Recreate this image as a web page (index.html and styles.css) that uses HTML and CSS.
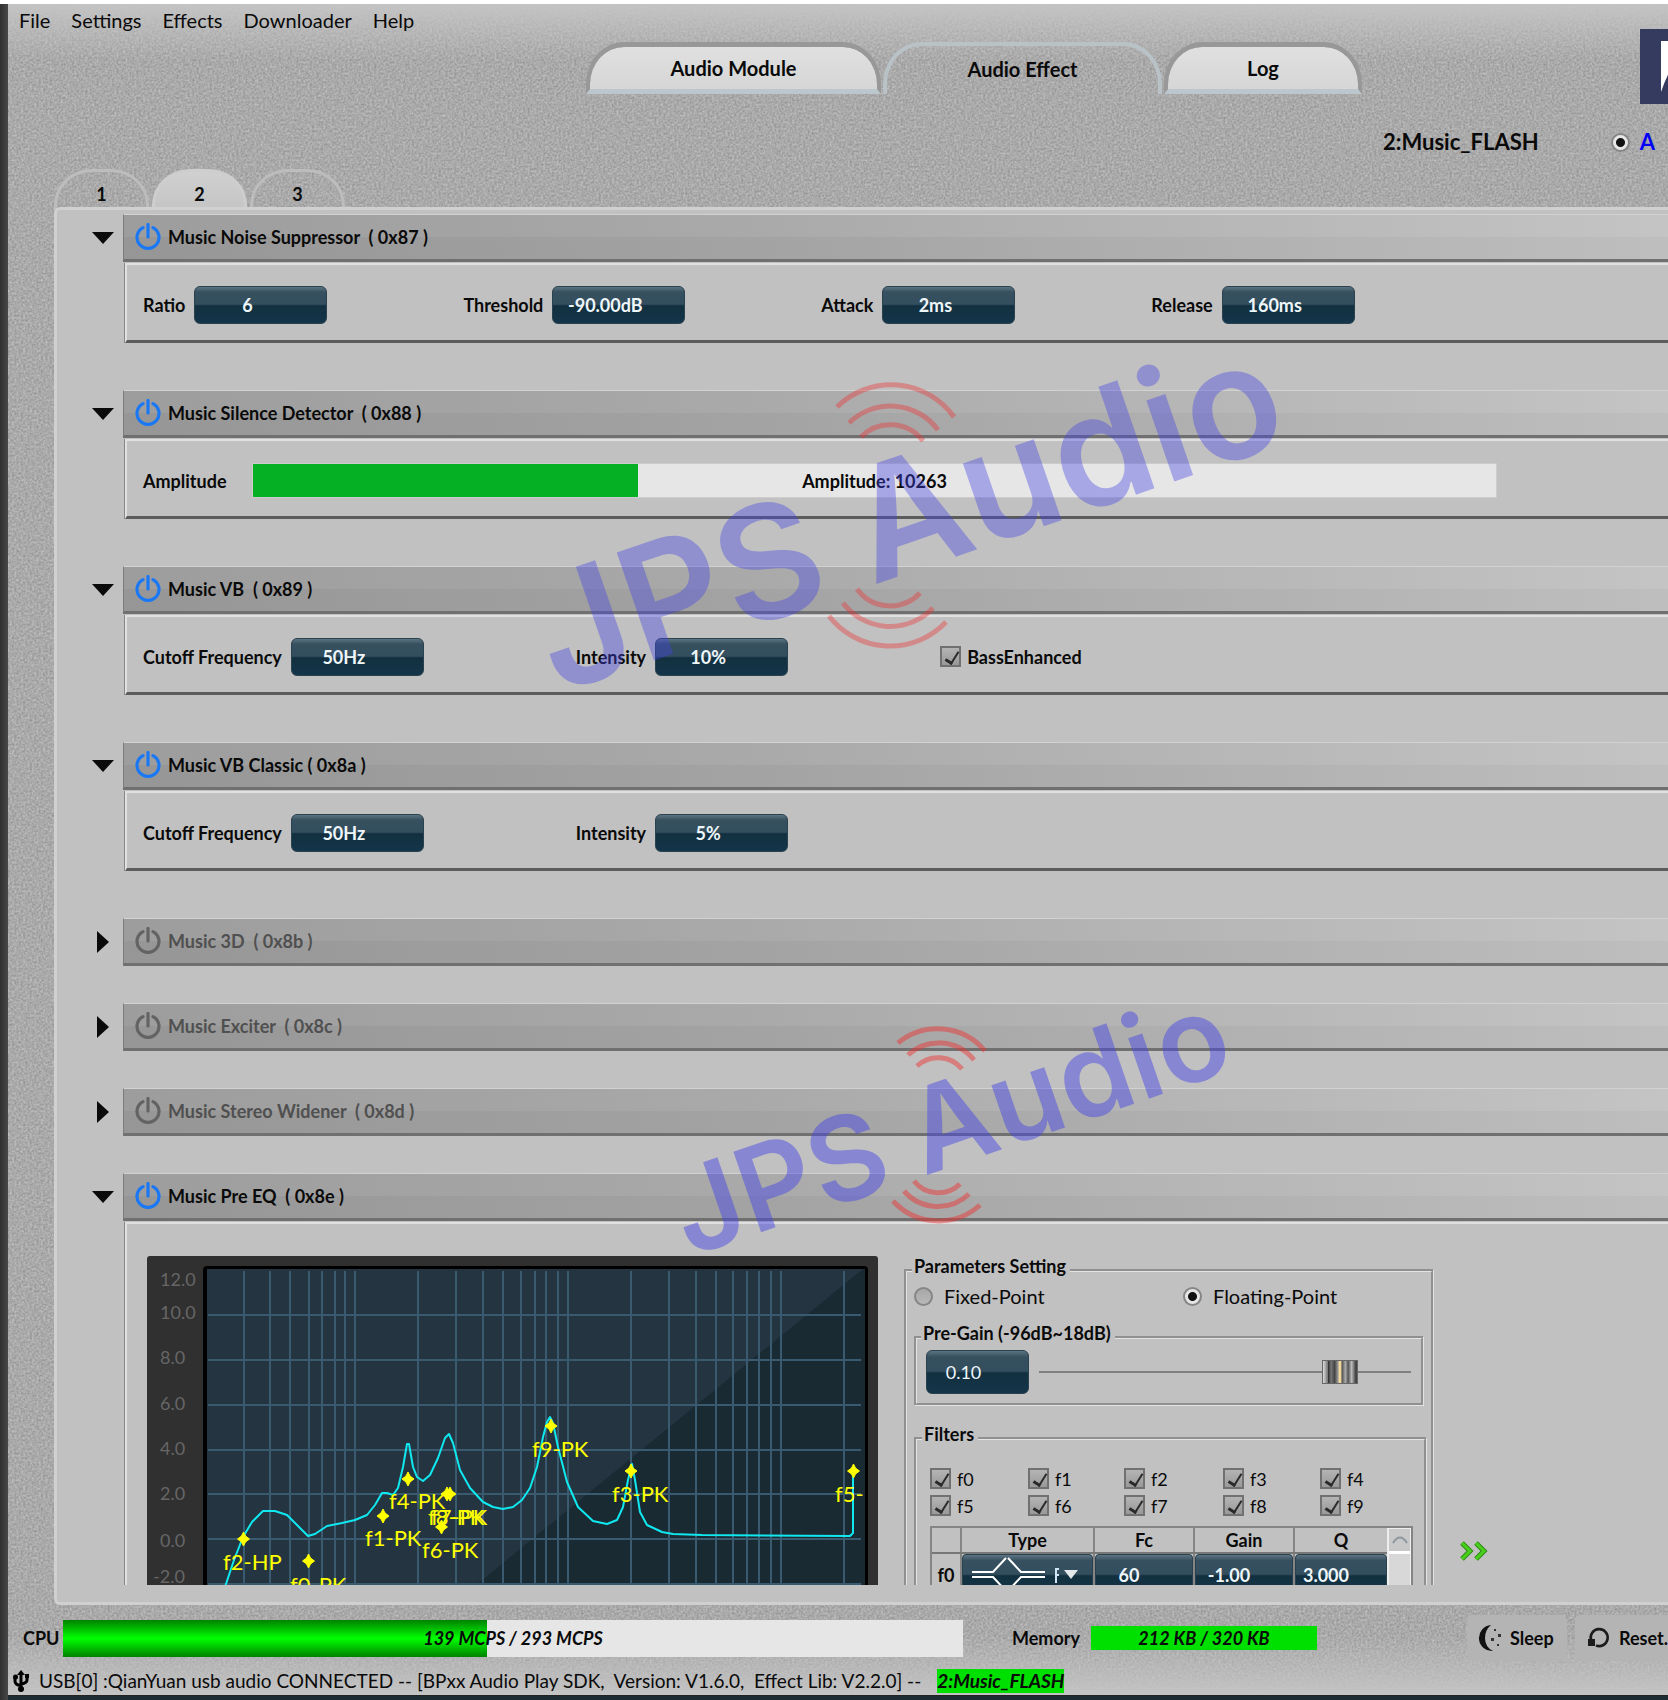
FILE: index.html
```html
<!DOCTYPE html>
<html lang="en">
<head>
<meta charset="utf-8">
<title>Audio Effect</title>
<link rel="stylesheet" href="styles.css">
</head>
<body>
<svg class="defs" aria-hidden="true">
  <symbol id="power" viewBox="0 0 28 28"><path d="M9 4.600A11 11 0 1 0 19 4.600M14 1.500V14" fill="none" stroke="currentColor" stroke-width="3.200" stroke-linecap="round"/></symbol>
  <symbol id="down" viewBox="0 0 22 12"><path d="M0 0H22L11 12Z" fill="#0a0a0a"/></symbol>
  <symbol id="right" viewBox="0 0 12 22"><path d="M0 0V22L12 11Z" fill="#0a0a0a"/></symbol>
</svg>
<div class="window">
  <svg class="grain" aria-hidden="true" width="100%" height="100%">
    <filter id="noise" x="0" y="0" width="100%" height="100%" color-interpolation-filters="sRGB"><feTurbulence type="fractalNoise" baseFrequency="0.45" numOctaves="2" seed="4"/><feColorMatrix values="0.25 0 0 0 0.54  0.25 0 0 0 0.54  0.25 0 0 0 0.54  0 0 0 0 1"/></filter>
    <rect width="100%" height="100%" filter="url(#noise)"/>
  </svg>
  <header class="top">
    <nav class="menu"><a href="#">File</a><a href="#">Settings</a><a href="#">Effects</a><a href="#">Downloader</a><a href="#">Help</a></nav>
    <div class="tabs">
      <button class="tab module">Audio Module</button>
      <button class="tab effect">Audio Effect</button>
      <button class="tab log">Log</button>
      <svg class="logo" viewBox="0 0 75 75"><rect width="75" height="75" fill="#353a5f"/><path d="M21 12H40V40L32 38Q25 51 21 63Z" fill="#fff"/></svg>
    </div>
    <div class="mode"><span class="preset">2:Music_FLASH</span><label class="chan"><input type="radio" name="chan" checked>A</label></div>
    <div class="pages"><button class="page">1</button><button class="page on">2</button><button class="page">3</button></div>
  </header>

  <main class="panel">
    <div class="scroller">
      <section class="fx">
        <button class="fold" aria-label="Collapse"><svg width="22" height="12"><use href="#down"/></svg></button>
        <h2><button class="pow" aria-label="Power"><svg width="28" height="28"><use href="#power"/></svg></button>Music Noise Suppressor&nbsp; ( 0x87 )</h2>
        <div class="body row">
          <label>Ratio<input type="text" value="6"></label>
          <label>Threshold<input type="text" value="-90.00dB"></label>
          <label>Attack<input type="text" value="2ms"></label>
          <label>Release<input type="text" value="160ms"></label>
        </div>
      </section>
      <section class="fx">
        <button class="fold" aria-label="Collapse"><svg width="22" height="12"><use href="#down"/></svg></button>
        <h2><button class="pow" aria-label="Power"><svg width="28" height="28"><use href="#power"/></svg></button>Music Silence Detector&nbsp; ( 0x88 )</h2>
        <div class="body row amp"><span class="amp-label">Amplitude</span><div class="meter"><div class="fill" style="width:31%"></div><span>Amplitude: 10263</span></div></div>
      </section>
      <section class="fx">
        <button class="fold" aria-label="Collapse"><svg width="22" height="12"><use href="#down"/></svg></button>
        <h2><button class="pow" aria-label="Power"><svg width="28" height="28"><use href="#power"/></svg></button>Music VB&nbsp; ( 0x89 )</h2>
        <div class="body row wide">
          <label>Cutoff Frequency<input type="text" value="50Hz"></label>
          <label>Intensity<input type="text" value="10%"></label>
          <label class="tick"><input type="checkbox" checked>BassEnhanced</label>
        </div>
      </section>
      <section class="fx">
        <button class="fold" aria-label="Collapse"><svg width="22" height="12"><use href="#down"/></svg></button>
        <h2><button class="pow" aria-label="Power"><svg width="28" height="28"><use href="#power"/></svg></button>Music VB Classic ( 0x8a )</h2>
        <div class="body row wide">
          <label>Cutoff Frequency<input type="text" value="50Hz"></label>
          <label>Intensity<input type="text" value="5%"></label>
        </div>
      </section>
      <section class="fx off">
        <button class="fold" aria-label="Expand"><svg width="12" height="22"><use href="#right"/></svg></button>
        <h2><button class="pow" aria-label="Power"><svg width="28" height="28"><use href="#power"/></svg></button>Music 3D&nbsp; ( 0x8b )</h2>
      </section>
      <section class="fx off">
        <button class="fold" aria-label="Expand"><svg width="12" height="22"><use href="#right"/></svg></button>
        <h2><button class="pow" aria-label="Power"><svg width="28" height="28"><use href="#power"/></svg></button>Music Exciter&nbsp; ( 0x8c )</h2>
      </section>
      <section class="fx off">
        <button class="fold" aria-label="Expand"><svg width="12" height="22"><use href="#right"/></svg></button>
        <h2><button class="pow" aria-label="Power"><svg width="28" height="28"><use href="#power"/></svg></button>Music Stereo Widener&nbsp; ( 0x8d )</h2>
      </section>
      <section class="fx">
        <button class="fold" aria-label="Collapse"><svg width="22" height="12"><use href="#down"/></svg></button>
        <h2><button class="pow" aria-label="Power"><svg width="28" height="28"><use href="#power"/></svg></button>Music Pre EQ&nbsp; ( 0x8e )</h2>
        <div class="body eq">
          <svg class="graph" width="731" height="329" viewBox="147 1256 731 329">
            <rect x="147" y="1256" width="731" height="340" rx="3" fill="#303030"/>
            <rect x="203" y="1266" width="665" height="330" rx="4" fill="#000"/>
            <rect x="207" y="1269" width="658" height="320" fill="#1a2a33"/>
            <path d="M207 1269H863L476 1585H207Z" fill="#243541"/>
            <path d="M208 1315H861M208 1360H861M208 1405H861M208 1450H861M208 1494H861M208 1539H861M208 1584H861M244 1271V1585M270 1271V1585M290 1271V1585M309 1271V1585M322 1271V1585M335 1271V1585M345 1271V1585M355 1271V1585M418 1271V1585M456 1271V1585M483 1271V1585M503 1271V1585M521 1271V1585M535 1271V1585M546 1271V1585M558 1271V1585M568 1271V1585M631 1271V1585M669 1271V1585M696 1271V1585M716 1271V1585M733 1271V1585M747 1271V1585M759 1271V1585M771 1271V1585M781 1271V1585M844 1271V1585" stroke="#3a5a70" stroke-width="2" fill="none"/>
            <g class="axis"><text x="160" y="1286">12.0</text><text x="160" y="1319">10.0</text><text x="160" y="1364">8.0</text><text x="160" y="1410">6.0</text><text x="160" y="1455">4.0</text><text x="160" y="1500">2.0</text><text x="160" y="1547">0.0</text><text x="153" y="1583">-2.0</text></g>
            <path d="M225 1587L234 1560 243 1537 252 1522 263 1511H275L287 1515 308 1536 315 1534 327 1526 342 1523 355 1520 367 1515 375 1505 382 1493H387L393 1495 398 1488 403 1467 407 1444H409L413 1467 417 1477 423 1481 430 1475 438 1458 445 1438 449 1434 453 1443 460 1470 470 1488 483 1502 493 1507 503 1509 513 1507 522 1500 530 1488 537 1467 543 1437 547 1422 550 1417 553 1423 558 1447 567 1482 578 1507 593 1521 607 1524 617 1520 623 1507 628 1480 632 1464 635 1480 640 1512 647 1525 662 1532 673 1534 702 1535 850 1536 853 1533V1473" fill="none" stroke="#10e8f0" stroke-width="2" stroke-linejoin="round"/>
            <path d="M243.500 1532l2 4 4 3-4 3-2 4-2-4-4-3 4-3zM308.500 1554l2 4 4 3-4 3-2 4-2-4-4-3 4-3zM383 1509l2 4 4 3-4 3-2 4-2-4-4-3 4-3zM408 1472l2 4 4 3-4 3-2 4-2-4-4-3 4-3zM447 1487l2 4 4 3-4 3-2 4-2-4-4-3 4-3zM450 1487l2 4 4 3-4 3-2 4-2-4-4-3 4-3zM441.500 1520l2 4 4 3-4 3-2 4-2-4-4-3 4-3zM551 1419l2 4 4 3-4 3-2 4-2-4-4-3 4-3zM631 1464l2 4 4 3-4 3-2 4-2-4-4-3 4-3zM853.500 1464l2 4 4 3-4 3-2 4-2-4-4-3 4-3z" fill="#ff0" stroke="#ff0"/>
            <g class="points"><text x="223" y="1570">f2-HP</text><text x="290" y="1593">f0-PK</text><text x="365" y="1546">f1-PK</text><text x="389" y="1509">f4-PK</text><text x="428" y="1525">f8-PK</text><text x="431" y="1525">f7-PK</text><text x="422" y="1558">f6-PK</text><text x="532" y="1457">f9-PK</text><text x="612" y="1502">f3-PK</text><text x="835" y="1502">f5-</text></g>
          </svg>
          <fieldset class="params">
            <legend>Parameters Setting</legend>
            <div class="points-mode">
              <label><input type="radio" name="pt">Fixed-Point</label>
              <label><input type="radio" name="pt" checked>Floating-Point</label>
            </div>
            <fieldset class="gain">
              <legend>Pre-Gain (-96dB~18dB)</legend>
              <input type="text" value="0.10" aria-label="Pre-Gain">
              <input type="range" min="-96" max="18" value="0.1" step="0.1" aria-label="Pre-Gain slider">
            </fieldset>
            <fieldset class="filters">
              <legend>Filters</legend>
              <div class="ticks">
                <label><input type="checkbox" checked>f0</label><label><input type="checkbox" checked>f1</label><label><input type="checkbox" checked>f2</label><label><input type="checkbox" checked>f3</label><label><input type="checkbox" checked>f4</label>
                <label><input type="checkbox" checked>f5</label><label><input type="checkbox" checked>f6</label><label><input type="checkbox" checked>f7</label><label><input type="checkbox" checked>f8</label><label><input type="checkbox" checked>f9</label>
              </div>
              <div class="grid">
                <table>
                  <colgroup><col class="c0"><col class="c1"><col class="c2"><col class="c2"><col class="c4"></colgroup>
                  <thead><tr><th></th><th>Type</th><th>Fc</th><th>Gain</th><th>Q</th></tr></thead>
                  <tbody><tr><th>f0</th>
                    <td><button class="kind" aria-label="Filter type"><svg width="108" height="40" viewBox="0 0 108 40"><path d="M0 16H21L34 2M36 2L49 16H73M0 21H21L35 36L49 21H73" fill="none" stroke="#fff" stroke-width="2"/><path d="M84 12V27M84 13H87M84 19H87" stroke="#cfe4f5" stroke-width="2"/><path d="M92 14H106L99 23Z" fill="#e4e8ea"/></svg></button></td>
                    <td><input type="text" value="60" aria-label="Fc"></td><td><input type="text" value="-1.00" aria-label="Gain"></td><td><input type="text" value="3.000" aria-label="Q"></td></tr></tbody>
                </table>
                <div class="bar"><button aria-label="Scroll up"><svg width="16" height="9" viewBox="0 0 16 9"><path d="M1 7Q8-4 15 7" fill="none" stroke="#8c979f" stroke-width="2"/></svg></button></div>
              </div>
            </fieldset>
          </fieldset>
          <button class="more" aria-label="More"><svg width="28" height="20" viewBox="0 0 28 20"><path d="M2 2L10 10L2 18M16 2L24 10L16 18" fill="none" stroke="#2c8a10" stroke-width="5"/><path d="M2 2L10 10L2 18M16 2L24 10L16 18" fill="none" stroke="#49d01d" stroke-width="3"/></svg></button>
        </div>
      </section>
    </div>
  </main>

  <footer class="bottom">
    <div class="load">
      <span class="cpu-label">CPU</span>
      <div class="meter cpu"><div class="fill" style="width:47.1%"></div><span>139 MCPS / 293 MCPS</span></div>
      <span class="mem-label">Memory</span><span class="mem">212 KB / 320 KB</span>
      <button class="act sleep"><svg width="26" height="28" viewBox="0 0 26 28"><path d="M15 1A13 13 0 1 0 17 27Q9 23 9 14Q9 6 15 1Z" fill="#111"/><path d="M15 14h3v3h-3zM22 10h3v3h-3zM18 5h2v2h-2zM21 20h2v2h-2z" fill="#333"/></svg>Sleep</button>
      <button class="act reset"><svg width="22" height="22" viewBox="0 0 22 22"><path d="M3 13A8.500 8.500 0 1 1 8 18.500" fill="none" stroke="#1c1c1c" stroke-width="2.600"/><path d="M0 12H7V19H0Z" fill="#1c1c1c"/></svg>Reset.</button>
    </div>
    <div class="status"><svg width="16" height="22" viewBox="0 0 16 22"><path d="M8 2V19M2 8V11Q2 15 8 15.500M14 7V10Q14 13 8 14" fill="none" stroke="#000" stroke-width="3"/><path d="M4 5L8 0L12 5Z"/><circle cx="8" cy="19" r="3"/><circle cx="2.500" cy="7" r="2.500"/><path d="M12 4h4v4h-4z"/></svg><span>USB[0] :QianYuan usb audio CONNECTED -- [BPxx Audio Play SDK,&nbsp; Version: V1.6.0,&nbsp; Effect Lib: V2.2.0] --</span><mark>2:Music_FLASH</mark></div>
  </footer>
</div>
<svg class="watermark" width="1668" height="1300" viewBox="0 0 1668 1300" aria-hidden="true">
  <g opacity=".38">
    <text transform="translate(557 694) rotate(-19)" font-size="157">JPS Audio</text>
    <path d="M837 407A77 77 0 0 1 954 417M849 423A59 59 0 0 1 938 430M861 437A41 41 0 0 1 923 441M857 589A41 41 0 0 0 920 593M843 603A59 59 0 0 0 933 608M829 616A77 77 0 0 0 946 622"/>
  </g>
  <g opacity=".46">
    <text transform="translate(689 1257) rotate(-19)" font-size="117">JPS Audio</text>
    <path d="M898 1043A62 62 0 0 1 985 1051M908 1055A45 45 0 0 1 974 1060M917 1066A31 31 0 0 1 962 1069M914 1181A31 31 0 0 0 960 1184M904 1191A45 45 0 0 0 969 1194M893 1201A62 62 0 0 0 980 1205"/>
  </g>
</svg>
</body>
</html>
```

FILE: styles.css
```css
* { box-sizing: border-box; }
body {
  margin: 0;
  height: 100vh;
  overflow: hidden;
  position: relative;
  padding: 4px 0 4px 8px;
  background: linear-gradient(90deg, #303030, #484848 8px, #1d2b33 8px);
  font: bold 18px/24px Lato, "Open Sans", sans-serif;
  color: #0a0a0a;
}
body::before {
  content: "";
  position: absolute;
  inset: 0 0 auto;
  height: 4px;
  background: #fff;
}
button, input { font: inherit; color: inherit; margin: 0; }
button { padding: 0; border: 0; background: none; }
.defs { position: absolute; width: 0; height: 0; }

.window {
  position: relative;
  height: 100%;
  display: flex;
  flex-direction: column;
  background: #a9a9a9;
  border-bottom: 1px solid #222;
  overflow: hidden;
  isolation: isolate;
}
.grain { position: absolute; inset: 0; z-index: -2; }
.window::after {
  content: "";
  position: absolute;
  inset: 0;
  z-index: -1;
  background: linear-gradient(#c4c4c4, #c4c4c400 56px, #c4c4c400 calc(100% - 60px), #c4c4c4);
}

.top { flex: none; }
.menu { display: flex; gap: 21px; height: 35px; padding: 0 0 4px 11px; align-items: center; font-weight: normal; font-size: 20px; }
.menu a { color: inherit; text-decoration: none; }
.tabs { display: flex; align-items: flex-start; gap: 2px; height: 80px; padding: 3px 0 0 578px; font-size: 20px; }
.tab { height: 52px; border: 4px solid #989898; border-width: 5px 4px 0; border-bottom: 5px solid #bcc7cd; border-radius: 38px 38px 0 0 / 42px 42px 0 0; background: linear-gradient(#e0e0e0, #d6d6d6); background-clip: padding-box; flex: none; line-height: 40px; }
.module { width: 295px; }
.effect { width: 279px; background: none; border: 4px solid #b9c2c7; border-bottom: 0; padding: 0 0 3px; }
.log { width: 198px; }
.logo { flex: none; width: 75px; height: 75px; margin-left: 276px; margin-top: -13px; }
.mode { display: flex; align-items: center; justify-content: flex-end; height: 46px; padding-right: 13px; gap: 72px; font-size: 22px; }
.chan { display: flex; align-items: center; gap: 10px; color: #0000f5; }
.pages { display: flex; gap: 3px; padding-left: 46px; height: 42px; margin-top: 4px; }
.page { width: 95px; padding-top: 5px; border: 3px solid #bdbdbd; border-bottom: 0; border-radius: 38px 38px 0 0 / 36px 36px 0 0; }
.page.on { background: linear-gradient(#d0d0d0, #c4c4c4); border-color: #cecece; }

.panel {
  flex: 1;
  min-height: 0;
  margin-left: 46px;
  margin-top: -4px;
  padding: 4px 0 17px;
  background: #c1c1c1;
  border: 3px solid #d0d0d0;
  border-right: 0;
  border-radius: 6px 0 0 6px;
}
.scroller { height: 100%; overflow: hidden; }
.fx { display: grid; grid-template-columns: 66px 1fr; margin-bottom: 47px; }
.fx.off { margin-bottom: 37px; color: #505050; }
.fold { width: 22px; height: 48px; margin-left: 35px; display: flex; align-items: center; justify-content: center; }
.pow { color: #1a78f5; display: flex; }
.off .pow { color: #636363; }
.fx h2 {
  margin: 0;
  height: 48px;
  padding-left: 10px;
  display: flex;
  align-items: center;
  gap: 6px;
  font-size: 18px;
  border-top: 1px solid #d2d2d2;
  border-left: 1px solid #7c7c7c;
  border-bottom: 3px solid #707070;
  background: linear-gradient(#ffffff0c 50%, #00000004 50%), linear-gradient(90deg, #989898, #a6a6a6 42%, #c1c1c1);
}
.body { grid-column: 2; margin-top: 1px; border: 2px solid #e0e0e0; border-right: 0; border-bottom: 3px solid #5c5c5c; box-shadow: -1px 0 #888; margin-left: 2px; }
.row { height: 80px; display: flex; align-items: center; gap: 136px; padding: 4px 0 0 16px; }
.wide { gap: 152px; }
.row label { display: flex; align-items: center; gap: 9px; }
input[type="text"] {
  width: 133px;
  height: 38px;
  padding: 0 27px 0 0;
  text-align: center;
  color: #eef6fa;
  border: 1px solid #2a414f;
  border-radius: 6px;
  background: linear-gradient(#5d7482, #36505f 14%, #334e5e 48%, #12303f 52%, #14354a);
}
input[type="checkbox"] {
  appearance: none;
  width: 21px;
  height: 21px;
  border: 2px solid #717171;
  background: linear-gradient(#b4b4b4, #999);
  position: relative;
}
input[type="checkbox"]:checked::after {
  content: "";
  position: absolute;
  left: 6px;
  top: 1px;
  width: 6px;
  height: 12px;
  border: solid #2a2a2a;
  border-width: 0 2px 3px 0;
  transform: rotate(32deg);
}
input[type="radio"] { appearance: none; width: 19px; height: 19px; border: 2px solid #868686; border-radius: 50%; background: linear-gradient(#a8a8a8, #b8b8b8); }
input[type="radio"]:checked { background: radial-gradient(#111 4px, #e6e6e6 5px); }
.row .tick { gap: 6px; }
.amp { gap: 0; }
.amp-label { width: 109px; }
.meter { position: relative; display: grid; height: 35px; background: #e6e6e6; align-items: center; text-align: center; }
.meter > * { grid-area: 1 / 1; }
.amp .meter { width: 1245px; flex: 0 1 auto; border: 1px solid #ccc; }
.fill { height: 100%; background: #06b025; }
.cpu .fill { background: linear-gradient(#008200, #0f0 50%, #008200); }

.body.eq { display: flex; align-items: flex-start; padding: 32px 0 40px 20px; height: 500px; }
.graph { flex: none; display: block; overflow: hidden; }
.axis { font: 18px Lato, sans-serif; fill: #666; }
.points { font: 22px Lato, sans-serif; fill: #ff0; }
fieldset { margin: 0; padding: 0; border: 3px groove #e4e4e4; min-width: 0; }
legend { padding: 0 4px 8px 2px; line-height: 20px; }
.params { flex: none; width: 530px; margin-left: 26px; height: 440px; padding-left: 7px; }
.params > legend { margin-left: -2px; }
.points-mode { display: grid; grid-template-columns: 269px 1fr; font-weight: normal; height: 24px; font-size: 20px; }
.points-mode label { display: flex; align-items: center; gap: 11px; }
.gain { width: 510px; height: 83px; margin-top: 15px; padding-left: 9px; display: flex; align-items: center; gap: 10px; }
.gain legend { margin-left: -5px; }
.filters legend { margin-left: -8px; }
.gain input[type="text"] { width: 103px; height: 44px; font-weight: normal; padding-right: 28px; margin-top: -10px; }
input[type="range"] { appearance: none; width: 372px; height: 24px; background: linear-gradient(#0000 11px, #808080 11px, #808080 13px, #0000 13px); margin-top: -10px; }
input[type="range"]::-webkit-slider-thumb { appearance: none; width: 36px; height: 24px; border: 1px solid #666; background: linear-gradient(90deg, #ddd, #777 14%, #333 16%, #777 24%, #444 34%, #999 44%, #f2d79a 48%, #f2d79a 52%, #555 56%, #aaa 66%, #555 74%, #bbb 84%, #444 96%); }
.filters { width: 513px; height: 300px; margin-top: 18px; padding: 16px 0 0 13px; }
.ticks { display: grid; grid-template-columns: 98px 96px 99px 97px 1fr; row-gap: 6px; font-weight: normal; }
.ticks label { display: flex; align-items: center; gap: 6px; height: 21px; }
.grid { display: flex; margin-top: 10px; width: 483px; border: 2px solid #858585; }
.grid table { border-collapse: collapse; table-layout: fixed; width: 455px; }
.grid td, .grid th { padding: 0; border-right: 2px solid #858585; height: 24px; line-height: 24px; }
.grid thead th { border-bottom: 2px solid #777; }
.grid tr > :last-child { border-right: 0; }
.c0 { width: 29px; } .c1 { width: 133px; } .c2 { width: 100px; } .c4 { width: 93px; }
.grid td input[type="text"] { display: block; width: 100%; height: 42px; padding-right: 30px; border-radius: 4px; }
.kind { display: flex; width: 100%; height: 42px; padding: 1px 0 0 9px; border-radius: 4px; border: 1px solid #2a414f; background: linear-gradient(#5d7482, #36505f 14%, #334e5e 48%, #12303f 52%, #14354a); }
.bar { flex: 1; background: #d8d8d8; border: 1px solid #eee; border-left-width: 2px; }
.bar button { display: flex; width: 100%; height: 25px; align-items: center; justify-content: center; background: #c9c9c9; border-bottom: 3px solid #fff; }
.more { margin: 285px 0 0 26px; }

.bottom { flex: none; height: 90px; }
.load { display: flex; align-items: center; height: 66px; padding-left: 15px; white-space: nowrap; }
.load > * { flex: none; }
.cpu-label { width: 40px; }
.cpu { width: 900px; height: 37px; font-style: italic; }
.mem-label { margin-left: 49px; width: 79px; }
.mem { width: 226px; height: 24px; background: #00e000; text-align: center; font-style: italic; }
.act { height: 46px; display: flex; align-items: center; background: #b4b4b4; border-radius: 5px; }
.sleep { width: 100px; margin-left: 150px; padding-left: 9px; gap: 8px; }
.reset { width: 130px; margin-left: 8px; padding-left: 13px; gap: 9px; }
.status { display: flex; align-items: center; padding: 0 0 0 5px; height: 20px; font-weight: normal; font-size: 19px; white-space: pre; }
.status span { margin: 0 16px 0 10px; }
.status mark { background: #00e000; font-weight: bold; font-style: italic; color: inherit; }

.watermark { position: absolute; left: 0; top: 0; pointer-events: none; }
.watermark text { font-family: Inter, "Liberation Sans", sans-serif; font-weight: 600; font-kerning: none; fill: #4343e8; }
.watermark path { fill: none; stroke: #f03030; stroke-width: 5px; }
```
